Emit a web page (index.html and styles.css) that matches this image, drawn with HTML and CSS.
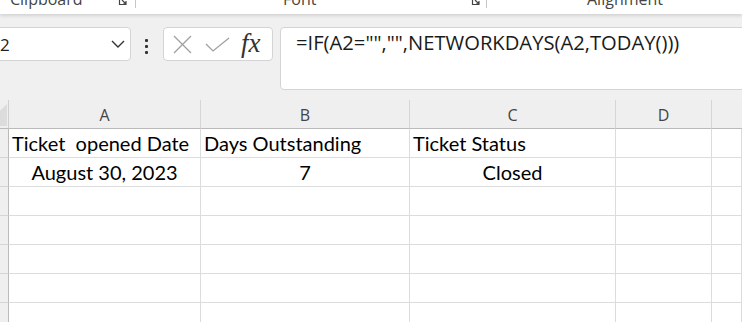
FILE: index.html
```html
<!DOCTYPE html>
<html>
<head>
  <title>Ticket Tracker - Excel</title>
  <link rel="stylesheet" href="styles.css">
</head>
<body>
  <!-- Faixa de opções (só a parte de baixo aparece) -->
  <div class="ribbon">
    <div class="group group-clipboard">
      <span class="group-label">Clipboard</span>
      <svg class="launcher" width="10" height="10" viewBox="0 0 10 10"><path d="M1.5 1.5v7h7M4 4l4 4M8 5v3h-3" fill="none" stroke="#444" stroke-width="1.2"/></svg>
    </div>
    <span class="separator"></span>
    <div class="group group-font">
      <span class="group-label">Font</span>
      <svg class="launcher" width="10" height="10" viewBox="0 0 10 10"><path d="M1.5 1.5v7h7M4 4l4 4M8 5v3h-3" fill="none" stroke="#444" stroke-width="1.2"/></svg>
    </div>
    <span class="separator"></span>
    <div class="group group-alignment">
      <span class="group-label">Alignment</span>
    </div>
  </div>

  <!-- Barra de fórmulas -->
  <div class="formula-bar">
    <div class="name-box">
      <span>2</span>
      <svg width="14" height="8" viewBox="0 0 14 8"><path d="M1 1l6 6 6-6" fill="none" stroke="#333" stroke-width="1.4"/></svg>
    </div>
    <div class="dots"><i></i><i></i><i></i></div>
    <div class="fx-box">
      <svg width="19" height="19" viewBox="0 0 19 19"><path d="M1 1l17 17M18 1L1 18" stroke="#a0a0a0" stroke-width="1.3"/></svg>
      <svg width="25" height="15" viewBox="0 0 25 15"><path d="M1 7l7 7L24 1" fill="none" stroke="#a0a0a0" stroke-width="1.3"/></svg>
      <span class="fx">fx</span>
    </div>
    <div class="formula-box">=IF(A2="","",NETWORKDAYS(A2,TODAY()))</div>
  </div>

  <!-- Planilha -->
  <div class="sheet">
    <div class="corner"><span class="select-all"></span></div>
    <div class="col-head">A</div>
    <div class="col-head">B</div>
    <div class="col-head">C</div>
    <div class="col-head">D</div>
    <div class="col-head col-last"></div>

    <div class="row-head"></div>
    <div class="cell">Ticket&nbsp; opened Date</div>
    <div class="cell">Days Outstanding</div>
    <div class="cell">Ticket Status</div>
    <div class="cell"></div>
    <div class="cell"></div>

    <div class="row-head"></div>
    <div class="cell center">August 30, 2023</div>
    <div class="cell center">7</div>
    <div class="cell center">Closed</div>
    <div class="cell"></div>
    <div class="cell"></div>

    <div class="row-head"></div><div class="cell"></div><div class="cell"></div><div class="cell"></div><div class="cell"></div><div class="cell"></div>
    <div class="row-head"></div><div class="cell"></div><div class="cell"></div><div class="cell"></div><div class="cell"></div><div class="cell"></div>
    <div class="row-head"></div><div class="cell"></div><div class="cell"></div><div class="cell"></div><div class="cell"></div><div class="cell"></div>
    <div class="row-head"></div><div class="cell"></div><div class="cell"></div><div class="cell"></div><div class="cell"></div><div class="cell"></div>
    <div class="row-head"></div><div class="cell"></div><div class="cell"></div><div class="cell"></div><div class="cell"></div><div class="cell"></div>
  </div>
</body>
</html>
```

FILE: styles.css
```css
/* Fundo e fonte geral */
body {
  margin: 0;
  background-color: #f0f0f0;
  font-family: "Open Sans", Arial, sans-serif;
  overflow: hidden;
  height: 322px;
}

/* Faixa de opções */
.ribbon {
  height: 14px;
  background-color: #fff;
  display: flex;
  overflow: hidden;
  box-shadow: 0px 2px 3px rgba(0, 0, 0, 0.12);
}

.group {
  display: flex;
  align-items: flex-start;
  box-sizing: border-box;
}

.group-label {
  font-size: 16px;
  line-height: 20px;
  color: #444;
  margin-top: -11px;
}

.launcher {
  margin-top: -4px;
}

.group-clipboard {
  width: 135px;
  padding-left: 10px;
  padding-right: 7px;
  justify-content: space-between;
}

.group-font {
  width: 350px;
  padding-left: 147px;
  padding-right: 5px;
  justify-content: space-between;
}

.group-alignment {
  padding-left: 100px;
}

.separator {
  width: 1px;
  height: 8px;
  background-color: #c6c6c6;
}

/* Barra de fórmulas */
.formula-bar {
  display: flex;
  align-items: flex-start;
  margin-top: 13px;
  height: 63px;
}

.name-box {
  width: 143px;
  height: 34px;
  margin-left: -12px;
  box-sizing: border-box;
  background-color: #fff;
  border: 1px solid #d4d4d4;
  border-radius: 4px;
  display: flex;
  align-items: center;
  justify-content: space-between;
  padding-left: 11px;
  padding-right: 5px;
  font-size: 17px;
  color: #222;
}

.dots {
  display: flex;
  flex-direction: column;
  gap: 3px;
  margin-top: 12px;
  margin-left: 14px;
}

.dots i {
  width: 3px;
  height: 3px;
  background-color: #333;
  border-radius: 1px;
}

.fx-box {
  width: 110px;
  height: 34px;
  margin-left: 15px;
  box-sizing: border-box;
  background-color: #fff;
  border: 1px solid #d4d4d4;
  border-radius: 4px;
  display: flex;
  align-items: center;
  gap: 13px;
  padding-left: 9px;
}

.fx {
  font-family: "Liberation Serif", serif;
  font-style: italic;
  font-size: 27px;
  line-height: 30px;
  color: #333;
  margin-left: -2px;
  margin-top: -2px;
}

.formula-box {
  flex: 1;
  height: 63px;
  margin-left: 7px;
  margin-right: -8px;
  box-sizing: border-box;
  background-color: #fff;
  border: 1px solid #d4d4d4;
  border-radius: 4px;
  padding-left: 15px;
  padding-top: 1px;
  font-size: 20.2px;
  line-height: 27px;
  color: #1a1a1a;
}

/* Planilha */
.sheet {
  display: grid;
  grid-template-columns: 9px 192px 209px 206px 96px 1fr;
  grid-auto-rows: 29px;
  padding-top: 10px;
}

.corner, .col-head {
  background-color: #efefef;
  border-bottom: 1px solid #bababa;
  box-sizing: border-box;
}

.corner {
  border-right: 1px solid #cfcfcf;
  position: relative;
  overflow: hidden;
}

.select-all {
  position: absolute;
  right: 1px;
  bottom: 2px;
  border-left: 24px solid transparent;
  border-bottom: 22px solid #dcdcdc;
}

.col-head {
  border-right: 1px solid #d5d5d5;
  text-align: center;
  font-size: 16px;
  line-height: 26px;
  padding-top: 2px;
  color: #444;
}

.col-last {
  border-right: none;
}

.row-head {
  background-color: #efefef;
  border-right: 1px solid #bababa;
  border-bottom: 1px solid #d5d5d5;
  box-sizing: border-box;
}

.cell {
  background-color: #fff;
  border-right: 1px solid #dcdcdc;
  border-bottom: 1px solid #dcdcdc;
  box-sizing: border-box;
  font-family: Lato, "Liberation Sans", sans-serif;
  font-size: 20px;
  line-height: 27px;
  padding: 1px 3px 0 3px;
  color: #000;
  white-space: nowrap;
}

.center {
  text-align: center;
}
```
